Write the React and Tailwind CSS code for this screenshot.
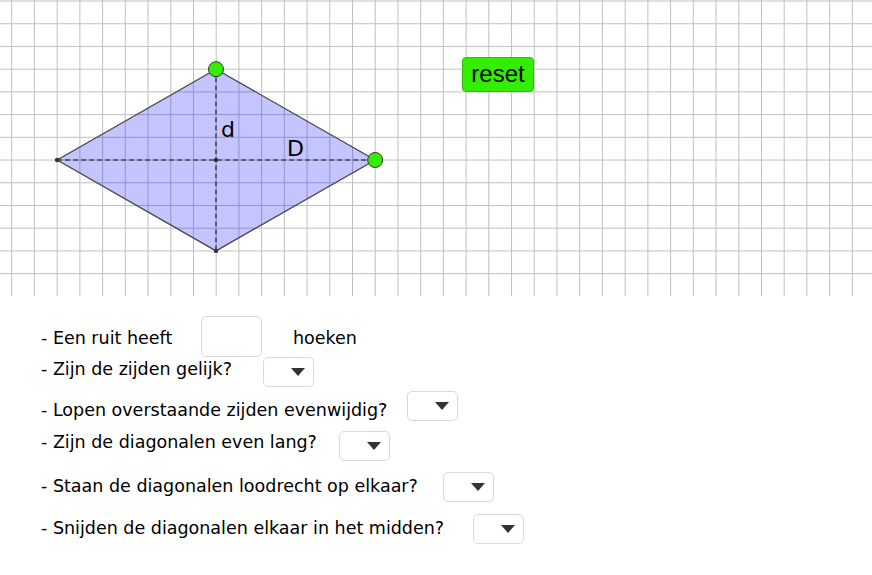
import React from 'react';

const STEP = 22.72;
const X0 = 11.7;
const Y0 = 1;

const rows = [
  { label: '- Zijn de zijden gelijk?', w: 'w-[222px]', gap: 'mt-0', shift: 'mb-[6px]' },
  { label: '- Lopen overstaande zijden evenwijdig?', w: 'w-[366px]', gap: 'mt-[4px]', shift: 'mt-[7px]' },
  { label: '- Zijn de diagonalen even lang?', w: 'w-[298px]', gap: 'mt-[10px]', shift: 'mb-[8px]' },
  { label: '- Staan de diagonalen loodrecht op elkaar?', w: 'w-[402px]', gap: 'mt-[11px]', shift: 'mb-[3px]' },
  { label: '- Snijden de diagonalen elkaar in het midden?', w: 'w-[432px]', gap: 'mt-[12px]', shift: 'mb-[2px]' },
];

const Dropdown = () => (
  <div className="w-[51px] h-[30px] rounded-[5px] border border-[#d9d9d9] bg-white flex items-center justify-end pr-[8px]">
    <svg width="14" height="8" viewBox="0 0 14 8">
      <polygon points="0,0 14,0 7,8" fill="#333" />
    </svg>
  </div>
);

const Canvas = () => {
  const vLines = [];
  for (let k = 0; k <= 37; k++) vLines.push(X0 + k * STEP);
  const hLines = [];
  for (let k = 0; k <= 12; k++) hLines.push(Y0 + k * STEP);

  const top = [216, 69.2];
  const right = [375.2, 160];
  const bottom = [216, 250.9];
  const left = [57.1, 160];

  return (
    <svg width="872" height="296" className="block">
      <rect width="872" height="296" fill="#fff" />
      {vLines.map((x, i) => (
        <line key={'v' + i} x1={x} y1="0" x2={x} y2="296" stroke="#c0c0c0" strokeWidth="1" />
      ))}
      {hLines.map((y, i) => (
        <line key={'h' + i} x1="0" y1={y} x2="872" y2={y} stroke="#c0c0c0" strokeWidth="1" />
      ))}
      <polygon
        points={[top, right, bottom, left].map((p) => p.join(',')).join(' ')}
        fill="#0000ff"
        fillOpacity="0.23"
        stroke="#444"
        strokeWidth="1.3"
        strokeLinejoin="round"
      />
      <line x1={top[0]} y1={top[1]} x2={bottom[0]} y2={bottom[1]} stroke="#444" strokeWidth="1.5" strokeDasharray="5 3" />
      <line x1={left[0]} y1={left[1]} x2={right[0]} y2={right[1]} stroke="#444" strokeWidth="1.5" strokeDasharray="5 3" />
      <circle cx={left[0]} cy={left[1]} r="2.2" fill="#333" />
      <circle cx="216" cy="160" r="2.2" fill="#333" />
      <circle cx={bottom[0]} cy={bottom[1]} r="2.2" fill="#333" />
      <circle cx={top[0]} cy={top[1]} r="7.5" fill="#33ee00" stroke="#333" strokeWidth="1" />
      <circle cx={right[0]} cy={right[1]} r="7.5" fill="#33ee00" stroke="#333" strokeWidth="1" />
      <text x="221" y="137" fontFamily="'DejaVu Sans', sans-serif" fontSize="22" fill="#000">d</text>
      <text x="287" y="156" fontFamily="'DejaVu Sans', sans-serif" fontSize="22" fill="#000">D</text>
    </svg>
  );
};

export default function App() {
  return (
    <div className="w-[872px] h-[575px] bg-white overflow-hidden text-black font-['DejaVu_Sans',sans-serif]">
      {/* Geometry view */}
      <div className="relative h-[296px]">
        <Canvas />
        <button className="absolute left-[462px] top-[57px] w-[72px] h-[35px] rounded-[4px] bg-[#33ee00] border border-[#2cc000] text-[24px] leading-none text-black font-['Liberation_Sans',Arial,sans-serif] flex items-center justify-center pb-[2px]">
          reset
        </button>
      </div>

      {/* Questions */}
      <div className="flex flex-col pl-[41px] pt-[20px] text-[17.5px] leading-[20px]">
        <div className="flex items-center h-[41px]">
          <span className="w-[160px] whitespace-nowrap mt-[2px]">- Een ruit heeft</span>
          <div className="w-[61px] h-[41px] rounded-[5px] border border-[#d9d9d9] bg-white" />
          <span className="ml-[31px] whitespace-nowrap mt-[2px]">hoeken</span>
        </div>
        {rows.map((r) => (
          <div key={r.label} className={`flex items-center h-[30px] ${r.gap}`}>
            <span className={`${r.w} whitespace-nowrap ${r.shift}`}>{r.label}</span>
            <Dropdown />
          </div>
        ))}
      </div>
    </div>
  );
}
